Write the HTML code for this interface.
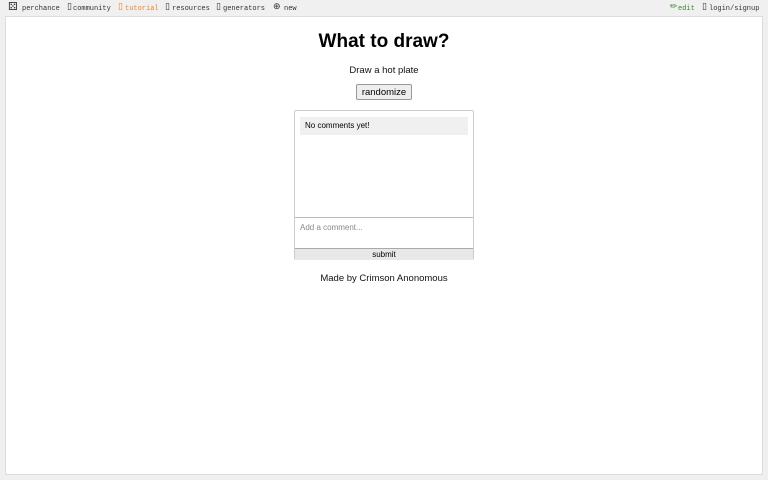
<!DOCTYPE html>
<html><head><style>
*{box-sizing:border-box}
body{margin:0;width:768px;height:480px;background:#f0f0f0;font-family:"Liberation Sans",sans-serif;position:relative;overflow:hidden}
.bar{position:absolute;top:0;left:0;right:0;height:16px;font-family:"Liberation Mono",monospace;font-size:7px;color:#333}
.bar span{position:absolute;top:5px;white-space:nowrap}
.bar i{position:absolute;top:2px;font-style:normal;font-size:9px;font-family:"DejaVu Sans",sans-serif}
.main{position:absolute;left:5px;top:16px;width:758px;height:459px;background:#fff;border:1px solid #ddd}
h1{position:absolute;top:14px;left:0;width:100%;text-align:center;margin:0;font-size:19px;font-weight:bold;color:#000}
.t{position:absolute;width:100%;text-align:center;font-size:9.5px;color:#111}
.btn{position:absolute;left:350px;top:67px;width:56px;height:16px;background:#eee;border:1px solid #999;border-radius:2px;font-size:9.5px;text-align:center;line-height:15px}
.cm{position:absolute;left:288px;top:93px;width:180px;height:150px;border:1px solid #ccc;border-radius:2px}
.nc{position:absolute;left:5px;top:6px;width:168px;height:18px;background:#f0f0f0;font-size:8px;line-height:18px;padding-left:5px}
.ta{position:absolute;left:0;top:106px;width:178px;height:31px;border-top:1px solid #bbb;font-size:8px;color:#888;padding:5px 5px}
.sb{position:absolute;left:0;top:137px;width:178px;height:12px;background:#e8e8e8;border-top:1px solid #aaa;font-size:8px;text-align:center;line-height:11px}
</style></head><body>
<div class="bar">
<i style="left:8px;font-size:11px;top:0">⚄</i>
<span style="left:22px">perchance</span>
<i style="left:67px">▯</i><span style="left:73px">community</span>
<i style="left:118px;color:#e8842c">▯</i><span style="left:125px;color:#e8842c">tutorial</span>
<i style="left:165px">▯</i><span style="left:172px">resources</span>
<i style="left:216px">▯</i><span style="left:223px">generators</span>
<i style="left:273px">⊕</i><span style="left:284px">new</span>
<i style="left:670px;color:#3a8a2a">✏</i><span style="left:678px;color:#3a8a2a">edit</span>
<i style="left:702px">▯</i><span style="left:709px">login/signup</span>
</div>
<div class="main">
<h1>What to draw?</h1>
<div class="t" style="top:48px">Draw a hot plate</div>
<div class="btn">randomize</div>
<div class="cm">
<div class="nc">No comments yet!</div>
<div class="ta">Add a comment...</div>
<div class="sb">submit</div>
</div>
<div class="t" style="top:256px">Made by Crimson Anonomous</div>
</div>
</body></html>
